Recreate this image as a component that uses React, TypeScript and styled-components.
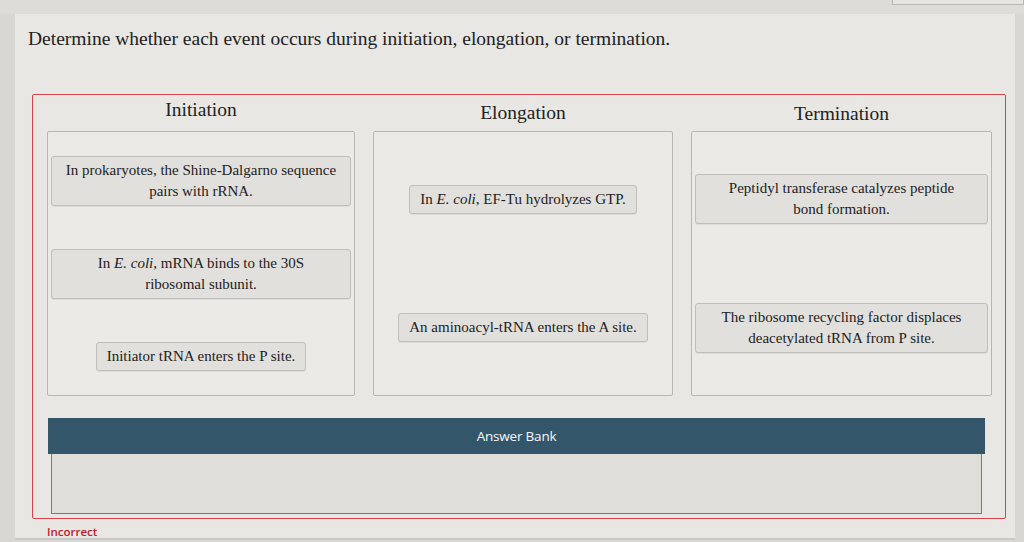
import styled, { createGlobalStyle } from 'styled-components';

const GlobalStyle = createGlobalStyle`
  html, body {
    margin: 0;
    padding: 0;
    background-color: #d8d7d3;
  }
`;

const TopStrip = styled.div`
  height: 14px;
  display: flex;
  justify-content: flex-end;
  background-color: #dddcd8;
`;

const TabStub = styled.div`
  width: 130px;
  height: 4px;
  border: 1px solid #b9b8b4;
  border-top: none;
  background-color: #e6e5e1;
`;

const Sheet = styled.div`
  margin: 0 9px 0 15px;
  padding: 13px 0 0 17px;
  height: 526px;
  box-sizing: border-box;
  background-color: #e8e7e3;
  border-bottom: 2px solid #c9c8c4;
`;

const Prompt = styled.p`
  margin: 0 0 0 -4px;
  font-family: 'Liberation Serif', 'Times New Roman', serif;
  font-size: 19.5px;
  line-height: 24px;
  color: #222;
`;

const Board = styled.div`
  margin-top: 43px;
  width: 974px;
  box-sizing: border-box;
  padding: 3px 15px 4px 14px;
  border: 1px solid #d4434c;
  border-radius: 2px;
`;

const Columns = styled.div`
  display: grid;
  grid-template-columns: 308px 300px 301px;
  column-gap: 18px;
`;

const Column = styled.div`
  display: flex;
  flex-direction: column;
`;

const Heading = styled.h3<{ $drop: number }>`
  margin: ${(p) => p.$drop}px 0 ${(p) => 9 - p.$drop}px;
  height: 24px;
  font-family: 'Liberation Serif', 'Times New Roman', serif;
  font-weight: normal;
  font-size: 19.5px;
  line-height: 24px;
  text-align: center;
  color: #222;
`;

const DropZone = styled.div`
  height: 265px;
  box-sizing: border-box;
  padding: 3px;
  display: flex;
  flex-direction: column;
  justify-content: space-around;
  align-items: center;
  background-color: #ebeae6;
  border: 1px solid #b7b6b3;
  border-radius: 2px;
`;

const Card = styled.div<{ $wide?: boolean }>`
  width: ${(p) => (p.$wide ? '100%' : 'auto')};
  max-width: 100%;
  box-sizing: border-box;
  padding: 3px 10px;
  font-family: 'Liberation Serif', 'Times New Roman', serif;
  font-size: 15px;
  line-height: 21px;
  text-align: center;
  white-space: nowrap;
  color: #222;
  background-color: #e1e0dd;
  border: 1px solid #bfbebb;
  border-radius: 3px;
  box-shadow: 0 1px 0 rgba(0, 0, 0, 0.06);
`;

const Bank = styled.div`
  margin: 22px 5px 0 1px;
`;

const BankHeader = styled.div`
  height: 36px;
  display: flex;
  align-items: center;
  justify-content: center;
  background-color: #34566b;
  font-family: 'Open Sans', 'Noto Sans', sans-serif;
  font-size: 13.5px;
  color: #f7f7f7;
  letter-spacing: -0.2px;
`;

const BankBody = styled.div`
  height: 60px;
  box-sizing: border-box;
  margin: 0 3px;
  background-color: #dfded9;
  border: 1px solid #7a7a7c;
  border-top: none;
`;

const Status = styled.div`
  margin: 5px 0 0 15px;
  font-family: 'Open Sans', 'Noto Sans', sans-serif;
  font-weight: 600;
  font-size: 11.5px;
  color: #b8202c;
`;

const columns = [
  {
    title: 'Initiation',
    drop: 0,
    items: [
      {
        wide: true,
        text: (
          <>
            In prokaryotes, the Shine-Dalgarno sequence
            <br />
            pairs with rRNA.
          </>
        ),
      },
      {
        wide: true,
        text: (
          <>
            In <i>E. coli</i>, mRNA binds to the 30S
            <br />
            ribosomal subunit.
          </>
        ),
      },
      { wide: false, text: <>Initiator tRNA enters the P site.</> },
    ],
  },
  {
    title: 'Elongation',
    drop: 3,
    items: [
      {
        wide: false,
        text: (
          <>
            In <i>E. coli</i>, EF-Tu hydrolyzes GTP.
          </>
        ),
      },
      { wide: false, text: <>An aminoacyl-tRNA enters the A site.</> },
    ],
  },
  {
    title: 'Termination',
    drop: 4,
    items: [
      {
        wide: true,
        text: (
          <>
            Peptidyl transferase catalyzes peptide
            <br />
            bond formation.
          </>
        ),
      },
      {
        wide: true,
        text: (
          <>
            The ribosome recycling factor displaces
            <br />
            deacetylated tRNA from P site.
          </>
        ),
      },
    ],
  },
];

export default function App() {
  return (
    <>
      <GlobalStyle />
      <TopStrip>
        <TabStub />
      </TopStrip>
      <Sheet>
        <Prompt>Determine whether each event occurs during initiation, elongation, or termination.</Prompt>
        <Board>
          <Columns>
            {columns.map((col) => (
              <Column key={col.title}>
                <Heading $drop={col.drop}>{col.title}</Heading>
                <DropZone>
                  {col.items.map((item, i) => (
                    <Card key={i} $wide={item.wide}>
                      {item.text}
                    </Card>
                  ))}
                </DropZone>
              </Column>
            ))}
          </Columns>
          <Bank>
            <BankHeader>Answer Bank</BankHeader>
            <BankBody />
          </Bank>
        </Board>
        <Status>Incorrect</Status>
      </Sheet>
    </>
  );
}
